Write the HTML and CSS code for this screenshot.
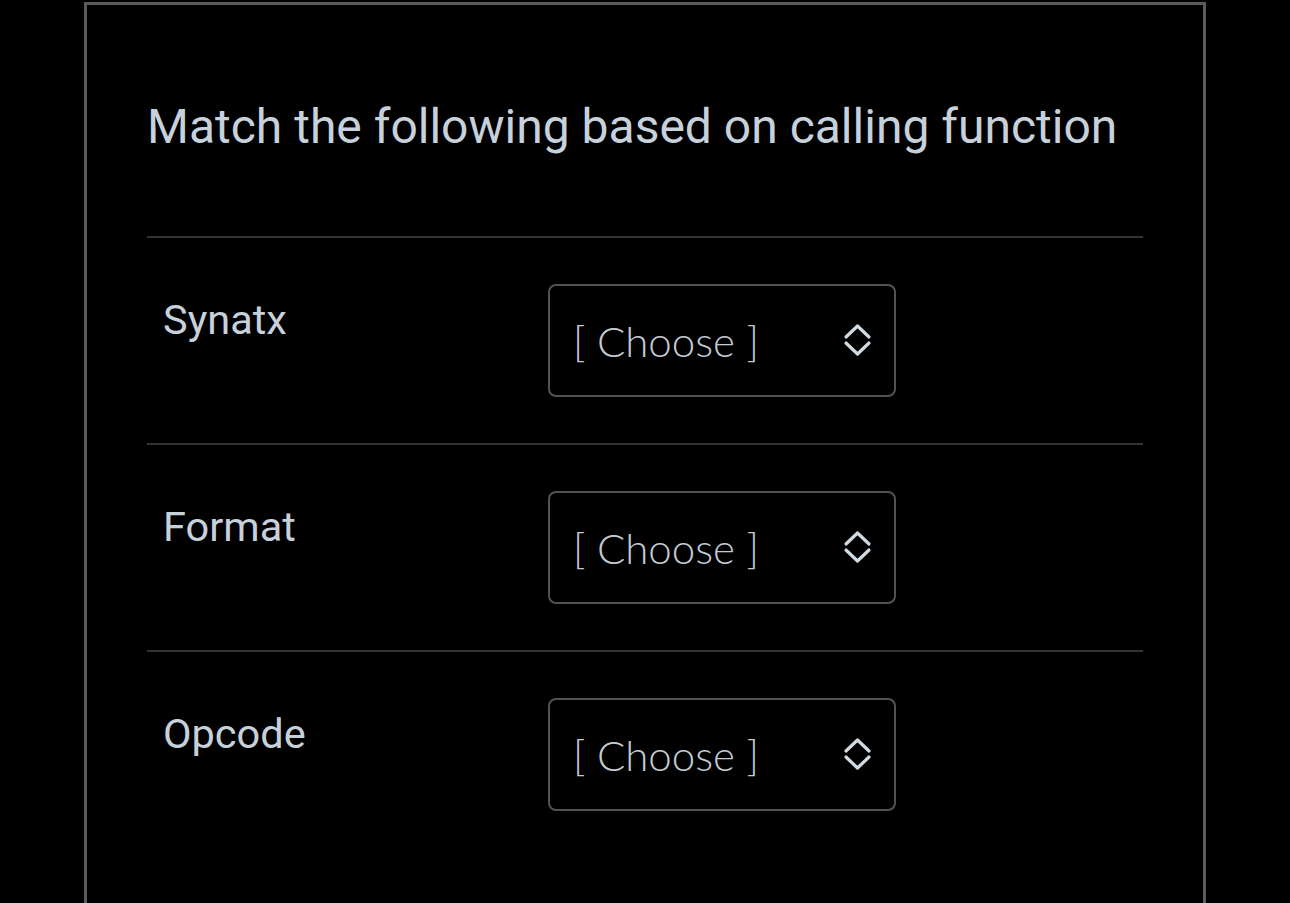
FILE: index.html
```html
<!DOCTYPE html>
<html>
<head>
<meta charset="utf-8">
<link rel="stylesheet" href="styles.css">
</head>
<body>
<div class="card">
  <h1 class="title">Match the following based on calling function</h1>
  <div class="row">
    <div class="label">Synatx</div>
    <div class="select"><span class="select-text">[ Choose ]</span>
      <svg class="chev" width="30" height="36" viewBox="0 0 30 36"><path d="M3 15 L14.5 4 L26 15 M3 21 L14.5 32 L26 21" fill="none" stroke="#cfdae3" stroke-width="3.2" stroke-linecap="round" stroke-linejoin="round"/></svg>
    </div>
  </div>
  <div class="row">
    <div class="label">Format</div>
    <div class="select"><span class="select-text">[ Choose ]</span>
      <svg class="chev" width="30" height="36" viewBox="0 0 30 36"><path d="M3 15 L14.5 4 L26 15 M3 21 L14.5 32 L26 21" fill="none" stroke="#cfdae3" stroke-width="3.2" stroke-linecap="round" stroke-linejoin="round"/></svg>
    </div>
  </div>
  <div class="row">
    <div class="label">Opcode</div>
    <div class="select"><span class="select-text">[ Choose ]</span>
      <svg class="chev" width="30" height="36" viewBox="0 0 30 36"><path d="M3 15 L14.5 4 L26 15 M3 21 L14.5 32 L26 21" fill="none" stroke="#cfdae3" stroke-width="3.2" stroke-linecap="round" stroke-linejoin="round"/></svg>
    </div>
  </div>
</div>
</body>
</html>
```
FILE: styles.css
```css
html, body {
  margin: 0;
  padding: 0;
  background: #000;
  overflow: hidden;
  height: 903px;
}
body {
  font-family: Roboto, "Liberation Sans", sans-serif;
  color: #c6d1db;
}
.card {
  margin: 2px 0 0 84px;
  width: 1122px;
  height: 1000px;
  border: 3px solid #5a5a5a;
  border-bottom: none;
  padding: 93px 60px 0 60px;
  box-sizing: border-box;
}
.title {
  margin: 0 0 80px 0;
  font-size: 48px;
  font-weight: 400;
  line-height: 1.2;
  color: #c6d1db;
}
.row {
  border-top: 2px solid #333;
  padding: 46px 0 46px 16px;
  display: flex;
  align-items: flex-start;
}
.label {
  width: 385px;
  padding-top: 11px;
  font-size: 41.5px;
  line-height: 1.2;
  color: #c6d1db;
}
.select {
  width: 348px;
  height: 113px;
  box-sizing: border-box;
  border: 2px solid #525252;
  border-radius: 8px;
  display: flex;
  align-items: center;
  justify-content: space-between;
  padding: 0 21px 0 23px;
}
.select-text {
  font-family: Lato, sans-serif;
  font-weight: 300;
  font-size: 42px;
  color: #c3cbd3;
  margin-top: 2px;
}
.chev {
  display: block;
}
```
